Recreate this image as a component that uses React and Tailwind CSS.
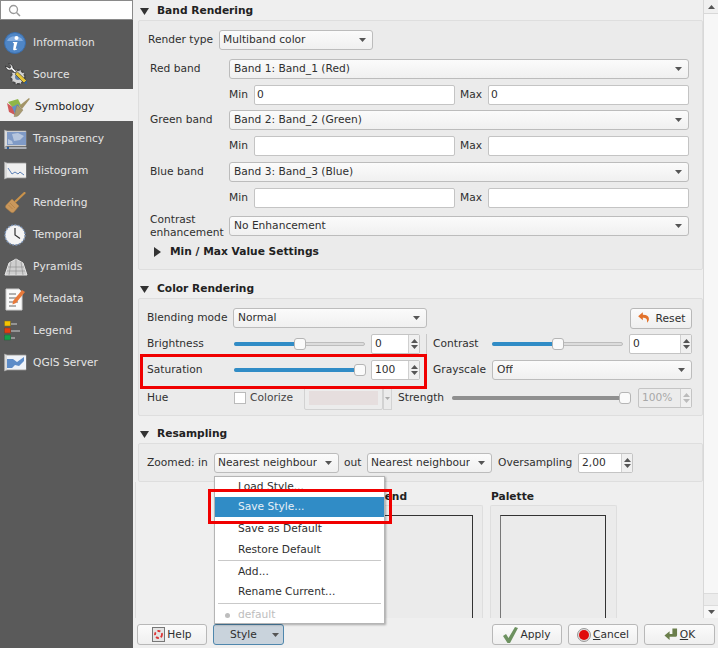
import React from 'react';

function Caret() {
    return <svg width="7" height="4" viewBox="0 0 7 4" className="shrink-0"><path d="M0 0h7L3.5 4z" fill="#555" /></svg>;
}

function Combo({ text, className = '', inset = 'pl-[3px]' }) {
    return (
        <div className={`flex h-5 items-center justify-between rounded-[3px] border border-[#bcbcbc] bg-gradient-to-b from-[#fbfbfb] to-[#f0f0f0] pr-[6px] ${inset} ${className}`}>
            <span className="truncate">{text}</span>
            <Caret />
        </div>
    );
}

function Input({ value = '', className = '' }) {
    return <div className={`flex h-5 items-center rounded-[2px] border border-[#c4c4c4] bg-white pl-[2px] ${className}`}>{value}</div>;
}

function Spin({ value, className = '', disabled = false }) {
    return (
        <div className={`flex h-5 items-center justify-between rounded-[2px] border border-[#c4c4c4] ${disabled ? 'bg-[#ececec] text-[#a8a8a8]' : 'bg-white'} ${className}`}>
            <span className="pl-[3px]">{value}</span>
            <div className="flex h-full w-[11px] flex-col items-center justify-center gap-[2px] border-l border-[#d0d0d0] bg-[#f0f0f0]">
                <svg width="7" height="4" viewBox="0 0 7 4"><path d="M3.5 0L7 4H0z" fill={disabled ? '#bbb' : '#555'} /></svg>
                <svg width="7" height="4" viewBox="0 0 7 4"><path d="M0 0h7L3.5 4z" fill={disabled ? '#bbb' : '#555'} /></svg>
            </div>
        </div>
    );
}

function Slider({ pct, className = '', grey = false }) {
    return (
        <div className={`relative flex h-5 items-center ${className}`}>
            <div className="h-[4px] w-full rounded-full border border-[#bdbdbd] bg-[#dcdcdc]" />
            <div className={`absolute left-0 top-[8px] h-[4px] rounded-full ${grey ? 'bg-[#8f8f8f]' : 'bg-[#308cc6]'}`} style={{ width: `${pct}%` }} />
            <div className="absolute top-[4px] h-[12px] w-[12px] rounded-[3px] border border-[#b5b5b5] bg-[#fafafa]" style={{ left: `calc(${pct}% - 6px)` }} />
        </div>
    );
}

function Section({ title, className = '' }) {
    return (
        <div className={`flex h-5 items-center gap-[8px] pl-[7px] pt-[2px] font-bold text-[#222] ${className}`}>
            <svg width="9" height="7" viewBox="0 0 9 7"><path d="M0 0h9L4.5 7z" fill="#333" /></svg>
            <span>{title}</span>
        </div>
    );
}

function PushButton({ icon, children, className = '' }) {
    return (
        <div className={`flex h-[21px] items-center justify-center gap-[2px] rounded-[3px] border border-[#b8b8b8] bg-gradient-to-b from-[#fbfbfb] to-[#efefef] ${className}`}>
            {icon}
            <span className="pt-[1px]">{children}</span>
        </div>
    );
}

function InfoIcon() {
    return (
        <svg width="22" height="22" viewBox="0 0 22 22">
            <circle cx="11" cy="11" r="10.5" fill="#4f86c6" stroke="#3a6ca8" />
            <path d="M3 9a8.5 7 0 0 1 16 0z" fill="#86aee0" />
            <circle cx="12.5" cy="6" r="2" fill="#fff" />
            <path d="M9 10h4.5l-1.8 6.5c-.1.5.3.6 1.5.1l-.2 1c-2 1-4.2 1-3.8-.9L10 11.2 8.8 11z" fill="#fff" />
        </svg>
    );
}

function SourceIcon() {
    return (
        <svg width="24" height="24" viewBox="0 0 24 24">
            <circle cx="14" cy="14" r="7" fill="#d4d4d4" stroke="#4a4a4a" strokeDasharray="3 1.5" strokeWidth="2" />
            <circle cx="14" cy="14" r="3" fill="#5f7fa8" />
            <path d="M1.5 3c.5 3.5 3 5 6 3.8L11 10l1.5-1.8L9 5c.2-2.5-2-4.5-4.5-4l2.4 2.2L6 5.2z" fill="#f0f0f0" stroke="#222" strokeWidth=".7" />
            <path d="M11 11l9 9 2.5-2.5L13.5 9z" fill="#e6c536" stroke="#333" strokeWidth=".6" />
            <path d="M20 20l3 1.5-.5-4z" fill="#2e5f9c" />
        </svg>
    );
}

function SymbologyIcon() {
    return (
        <svg width="24" height="22" viewBox="0 0 24 22">
            <path d="M2 6l10-3 3 6-7 4z" fill="#8fb648" />
            <path d="M1 7l7 5 1 7-6-3z" fill="#cf5a5a" />
            <path d="M6 11l6-3 3 5-6 5z" fill="#5f8fca" />
            <path d="M13 10L23 2l.8 1L16 13z" fill="#a39468" />
            <path d="M11 9l6 5-4 5c-1.500 1.500-3 1.800-5 1.500 1-2 1-5 3-11.500z" fill="#a89a70" stroke="#7d7250" strokeWidth=".4" />
        </svg>
    );
}

function BrushIcon() {
    return (
        <svg width="22" height="22" viewBox="0 0 22 22">
            <path d="M11 10L20.500 1" stroke="#c9924a" strokeWidth="2.200" strokeLinecap="round" />
            <path d="M8 7l7 7-5 6c-1 .8-2 .8-3 .2L2 16c-.8-1-.6-2 .2-3z" fill="#c9975c" stroke="#a97a3e" strokeWidth=".5" />
            <path d="M6 11l5 5M4.500 13l4 4" stroke="#a97a3e" strokeWidth=".6" />
        </svg>
    );
}

function ChartIcon({ kind }) {
    return (
        <svg width="23" height="21" viewBox="0 0 23 21">
            <path d="M.5 1l2.500 1h19v15H3l-2.500 1z" fill="#dcdcdc" stroke="#aaa" strokeWidth=".6" />
            <rect x="3" y="3" width="19" height="13" fill={kind === 'histogram' ? '#efefef' : kind === 'server' ? '#eef2f8' : '#7f9ac6'} />
            {kind === 'transparency' && <path d="M8 5l6-1 6 3-4 4-6 1zM4 10l4 2 1 3H4z" fill="#b6c6de" />}
            {kind === 'histogram' && <path d="M4 7l4 6 3-2 3 2 2-2 4 3" fill="none" stroke="#5b7fb5" strokeWidth="1" />}
            {kind === 'server' && <path d="M3 6h6l4 3 7-5v4l-5 5-4-1-3 3H3z" fill="#5d8cc8" />}
            {kind === 'transparency' && <path d="M.5 19h22" stroke="#dfe6f2" strokeWidth="1.200" />}
            {kind === 'transparency' && <rect x="3" y="18" width="2" height="2" fill="#2e5f9c" />}
        </svg>
    );
}

function ClockIcon() {
    return (
        <svg width="22" height="22" viewBox="0 0 22 22">
            <circle cx="11" cy="11" r="10" fill="#f4f4f4" stroke="#7f96b8" strokeWidth="1.400" strokeDasharray="2 1.300" />
            <path d="M11 4V11l5 3.500" fill="none" stroke="#333" strokeWidth="1.200" />
        </svg>
    );
}

function PyramidIcon() {
    return (
        <svg width="24" height="18" viewBox="0 0 24 18">
            <path d="M5 5l7-4 7 4 4 12H1z" fill="#cfcfcf" stroke="#e4e4e4" />
            <path d="M12 1v16M7 4L5 17M17 4l2 13M4 9h16M3 13h18" stroke="#8c8c8c" strokeWidth=".6" />
        </svg>
    );
}

function MetaIcon() {
    return (
        <svg width="22" height="23" viewBox="0 0 22 23">
            <path d="M2 1h13l3 3v18H2z" fill="#fafafa" stroke="#ccc" />
            <path d="M5 6h7M5 10h9M5 14h9M5 18h7" stroke="#666" />
            <path d="M9 13l9-11 3 2-9 11-3.500 1.500z" fill="#e8793a" />
        </svg>
    );
}

function LegendIcon() {
    return (
        <svg width="18" height="22" viewBox="0 0 18 22">
            <rect x=".5" y="1" width="6" height="5" fill="#f5c400" stroke="#7a6a20" strokeWidth=".5" />
            <rect x=".5" y="8" width="6" height="5" fill="#e23c10" stroke="#7a3a20" strokeWidth=".5" />
            <rect x=".5" y="15" width="6" height="5" fill="#12a04a" stroke="#20603a" strokeWidth=".5" />
            <path d="M7 4h6M7 11h9M7 18h4" stroke="#a8a8a8" strokeWidth="1.400" />
        </svg>
    );
}

const navItems = [
    { label: 'Information', icon: <InfoIcon /> },
    { label: 'Source', icon: <SourceIcon /> },
    { label: 'Symbology', icon: <SymbologyIcon />, active: true },
    { label: 'Transparency', icon: <ChartIcon kind="transparency" /> },
    { label: 'Histogram', icon: <ChartIcon kind="histogram" /> },
    { label: 'Rendering', icon: <BrushIcon /> },
    { label: 'Temporal', icon: <ClockIcon /> },
    { label: 'Pyramids', icon: <PyramidIcon /> },
    { label: 'Metadata', icon: <MetaIcon /> },
    { label: 'Legend', icon: <LegendIcon /> },
    { label: 'QGIS Server', icon: <ChartIcon kind="server" /> },
];

function Sidebar() {
    return (
        <div className="w-[133px] shrink-0 bg-[#5a5a5a]">
            <div className="flex h-[20px] items-center border border-[#8a8a8a] bg-white pl-[7px]">
                <svg width="13" height="13" viewBox="0 0 13 13"><circle cx="5.500" cy="5.500" r="4" fill="none" stroke="#9a9a9a" strokeWidth="1.300" /><path d="M8.500 8.500l3.500 3.500" stroke="#9a9a9a" strokeWidth="1.500" /></svg>
            </div>
            <div className="mt-[5px]">
                {navItems.map((item) => (
                    <div key={item.label} className={`flex h-8 items-center pt-[4px] ${item.active ? 'bg-[#efefef] pl-[6px] text-[#222]' : 'pl-[4px] text-[#e4e4e4]'}`}>
                        <div className="flex w-[29px] shrink-0 items-center justify-start">{item.icon}</div>
                        <span>{item.label}</span>
                    </div>
                ))}
            </div>
        </div>
    );
}

function BandRow({ label, band }) {
    return (
        <>
            <div className="flex h-5 items-center">
                <span className="w-[81px] pl-[2px]">{label}</span>
                <Combo text={band} inset="pl-[4px]" className="w-[460px]" />
            </div>
            <div className="ml-[81px] mt-[6px] flex h-5 items-center">
                <span className="w-[25px]">Min</span>
                <Input value={band.includes('Red') ? '0' : ''} className="w-[201px]" />
                <span className="w-[33px] pl-[5px]">Max</span>
                <Input value={band.includes('Red') ? '0' : ''} className="w-[201px]" />
            </div>
        </>
    );
}

function BandRendering() {
    return (
        <div className="ml-[5px] h-[250px] rounded-[2px] border border-[#dedede] bg-[#ebebeb] pl-[9px] pt-[9px]">
            <div className="flex h-5 items-center">
                <span className="w-[71px]">Render type</span>
                <Combo text="Multiband color" className="w-[154px]" />
            </div>
            <div className="mt-[9px] flex flex-col">
                <BandRow label="Red band" band="Band 1: Band_1 (Red)" />
                <div className="mt-[5px]"><BandRow label="Green band" band="Band 2: Band_2 (Green)" /></div>
                <div className="mt-[6px]"><BandRow label="Blue band" band="Band 3: Band_3 (Blue)" /></div>
            </div>
            <div className="mt-[8px] flex h-5 items-center">
                <span className="w-[81px] pl-[2px] leading-[13px]">Contrast<br />enhancement</span>
                <Combo text="No Enhancement" inset="pl-[4px]" className="w-[460px]" />
            </div>
            <div className="mt-[6px] flex h-5 items-center gap-[9px] pl-[6px] font-bold text-[#222]">
                <svg width="7" height="10" viewBox="0 0 7 10"><path d="M0 0l7 5-7 5z" fill="#333" /></svg>
                <span>Min / Max Value Settings</span>
            </div>
        </div>
    );
}

function ColorRendering() {
    return (
        <div className="ml-[5px] h-[118px] rounded-[2px] border border-[#dedede] bg-[#ebebeb] pl-[8px] pt-[9px]">
            <div className="flex h-5 items-center">
                <span className="w-[86px]">Blending mode</span>
                <Combo text="Normal" inset="pl-[4px]" className="w-[194px]" />
                <PushButton
                    className="ml-[203px] w-[62px] gap-[5px]"
                    icon={<svg width="14" height="14" viewBox="0 0 12 12"><path d="M5 1L1 4.500 5 8V5.800c2.500 0 4 .8 3.600 4.200C11 8.500 11.500 3 5 3.200z" fill="#e2712a" /></svg>}
                >Reset</PushButton>
            </div>
            <div className="mt-[6px] flex h-5 items-center">
                <span className="w-[87px]">Brightness</span>
                <Slider pct={50} className="w-[131px]" />
                <Spin value="0" className="ml-[6px] w-[49px]" />
                <div className="ml-[6px] h-5 w-px bg-[#c8c8c8]" />
                <span className="ml-[6px] w-[59px]">Contrast</span>
                <Slider pct={50} className="w-[131px]" />
                <Spin value="0" className="ml-[6px] w-[63px]" />
            </div>
            <div className="mt-[6px] flex h-5 items-center">
                <span className="w-[87px]">Saturation</span>
                <Slider pct={96} className="w-[131px]" />
                <Spin value="100" className="ml-[6px] w-[49px]" />
                <span className="ml-[13px] w-[59px]">Grayscale</span>
                <Combo text="Off" inset="pl-[4px]" className="w-[200px]" />
            </div>
            <div className="mt-[6px] flex h-[24px] items-center">
                <span className="w-[87px]">Hue</span>
                <div className="h-[12px] w-[12px] border border-[#bbb] bg-white" />
                <span className="ml-[4px] w-[54px] text-[#444]">Colorize</span>
                <div className="flex h-[24px] w-[79px] items-center justify-center rounded-[2px] border border-[#d2d2d2] bg-[#ececec]">
                    <div className="h-[14px] w-[69px] bg-[#e6dede]" />
                </div>
                <div className="flex h-[24px] w-[9px] items-center justify-center border border-[#d2d2d2]">
                    <svg width="5" height="3" viewBox="0 0 5 3"><path d="M0 0h5L2.500 3z" fill="#aaa" /></svg>
                </div>
                <span className="ml-[6px] w-[54px]">Strength</span>
                <Slider pct={97} grey className="w-[178px]" />
                <Spin value="100%" disabled className="ml-[8px] w-[54px]" />
            </div>
        </div>
    );
}

function Resampling() {
    return (
        <div className="ml-[5px] flex h-[39px] items-center rounded-[2px] border border-[#dedede] bg-[#ebebeb] pl-[8px]">
            <span className="w-[67px]">Zoomed: in</span>
            <Combo text="Nearest neighbour" className="w-[125px]" />
            <span className="ml-[5px] w-[23px]">out</span>
            <Combo text="Nearest neighbour" className="w-[125px]" />
            <span className="ml-[6px] w-[80px]">Oversampling</span>
            <Spin value="2,00" className="w-[55px]" />
        </div>
    );
}

function Preview({ title, width, innerW, titleClass }) {
    return (
        <div style={{ width }} className="shrink-0">
            <div className={`h-[17px] pt-[1px] font-bold text-[#222] ${titleClass}`}>{title}</div>
            <div className="h-[114px] rounded-t-[2px] border border-b-0 border-[#dedede] bg-[#ebebeb] pl-[9px] pt-[9px]">
                <div style={{ width: innerW }} className="h-[105px] border border-b-0 border-[#333] border-l-[#777] bg-[#ebebeb]" />
            </div>
        </div>
    );
}

function StyleMenu() {
    const row = 'flex h-5 items-center pl-[23px]';
    return (
        <div className="absolute left-[214px] top-[476px] z-10 h-[148px] w-[171px] border border-[#b5b5b5] bg-white pt-[1px] shadow-[1px_1px_2px_rgba(0,0,0,0.3)]">
            <div className={`${row} -mt-[1px]`}>Load Style...</div>
            <div className={`${row} bg-[#308cc6] text-[#e6f0f7]`}>Save Style...</div>
            <div className={`${row} mt-[2px]`}>Save as Default</div>
            <div className={`${row} mt-[1px]`}>Restore Default</div>
            <div className="mx-[3px] h-px bg-[#c9c9c9]" />
            <div className={`${row} mt-[1px]`}>Add...</div>
            <div className={row}>Rename Current...</div>
            <div className="mx-[3px] mt-[1px] h-px bg-[#c9c9c9]" />
            <div className="relative mt-[1px] flex h-5 items-center pl-[23px] text-[#bdbdbd]">
                <div className="absolute left-[10px] top-[8px] h-[5px] w-[5px] rounded-full bg-[#bdbdbd]" />
                default
            </div>
        </div>
    );
}

export default function App() {
    return (
        <div className="relative flex h-[648px] w-[718px] overflow-hidden bg-[#efefef] font-['DejaVu_Sans',sans-serif] text-[10.67px] text-[#2f2f2f]">
            <Sidebar />
            <div className="flex min-w-0 flex-1 flex-col">
                <div className="flex h-[618px] min-h-0">
                    <div className="w-[570px] shrink-0 overflow-hidden">
                        <Section title="Band Rendering" />
                        <BandRendering />
                        <Section title="Color Rendering" className="mt-[8px]" />
                        <ColorRendering />
                        <Section title="Resampling" className="mt-[7px]" />
                        <Resampling />
                        <div className="ml-[2px] flex h-[136px] border-l border-[#dcdcdc] pl-[1px]">
                            <div className="w-[217px] shrink-0" />
                            <div className="mt-[6px] flex gap-[7px]">
                                <Preview title="Legend" width={129} innerW={109} titleClass="pl-[9px]" />
                                <Preview title="Palette" width={127} innerW={106} titleClass="pl-[1px]" />
                            </div>
                        </div>
                    </div>
                    <div className="flex w-[15px] flex-col border-l border-[#d8d8d8] bg-[#f7f7f7]">
                        <div className="flex h-[14px] items-center justify-center border-b border-[#d8d8d8] bg-[#f0f0f0]">
                            <svg width="7" height="4" viewBox="0 0 7 4"><path d="M3.500 0L7 4H0z" fill="#555" /></svg>
                        </div>
                        <div className="flex-1" />
                        <div className="h-[13px] border-y border-[#dcdcdc] bg-[#ececec]" />
                        <div className="flex h-[12px] items-center justify-center">
                            <svg width="7" height="4" viewBox="0 0 7 4"><path d="M0 0h7L3.500 4z" fill="#555" /></svg>
                        </div>
                    </div>
                </div>
                <div className="mt-[6px] flex items-center pl-[4px]">
                    <PushButton
                        className="w-[70px] gap-[2px]"
                        icon={<svg width="13" height="15" viewBox="0 0 13 15"><rect x=".5" y=".5" width="12" height="14" fill="#e4e4e4" stroke="#777" /><circle cx="6.500" cy="7.500" r="3.500" fill="none" stroke="#d33" strokeWidth="1.800" strokeDasharray="3 2" /></svg>}
                    >Help</PushButton>
                    <div className="relative ml-[6px] flex h-[21px] w-[71px] items-center justify-between rounded-[3px] border border-[#4f87ad] bg-[#c9d3dc] pl-[16px] pr-[4px]">
                        <span className="pt-[1px]">Style</span>
                        <Caret />
                    </div>
                    <PushButton
                        className="ml-[208px] w-[70px] gap-[0px]"
                        icon={<svg width="15" height="16" viewBox="0 0 15 16"><path d="M0 9l3-2 2.500 4L12 0l3 1-8 15H4.500z" fill="#6d9160" /></svg>}
                    >Apply</PushButton>
                    <PushButton
                        className="ml-[6px] w-[70px] gap-[2px]"
                        icon={<svg width="14" height="14" viewBox="0 0 14 14"><circle cx="7" cy="7" r="6.500" fill="#ddd" stroke="#999" /><circle cx="7" cy="7" r="5" fill="#e00b0b" /></svg>}
                    ><span className="underline">C</span>ancel</PushButton>
                    <PushButton
                        className="ml-[6px] w-[71px] gap-[1px]"
                        icon={<svg width="14" height="13" viewBox="0 0 15 13"><path d="M9 0h5v7c0 1.500-1 2-2 2H6v3.500L.5 7.500 6 3v3h3z" fill="#6b7f4c" /></svg>}
                    ><span className="underline">O</span>K</PushButton>
                </div>
            </div>
            <StyleMenu />
            <div className="pointer-events-none absolute left-[140px] top-[354px] z-20 h-[35px] w-[287px] border-[3px] border-[#f00000]" />
            <div className="pointer-events-none absolute left-[208px] top-[489px] z-20 h-[35px] w-[184px] border-[3px] border-[#f00000]" />
        </div>
    );
}
